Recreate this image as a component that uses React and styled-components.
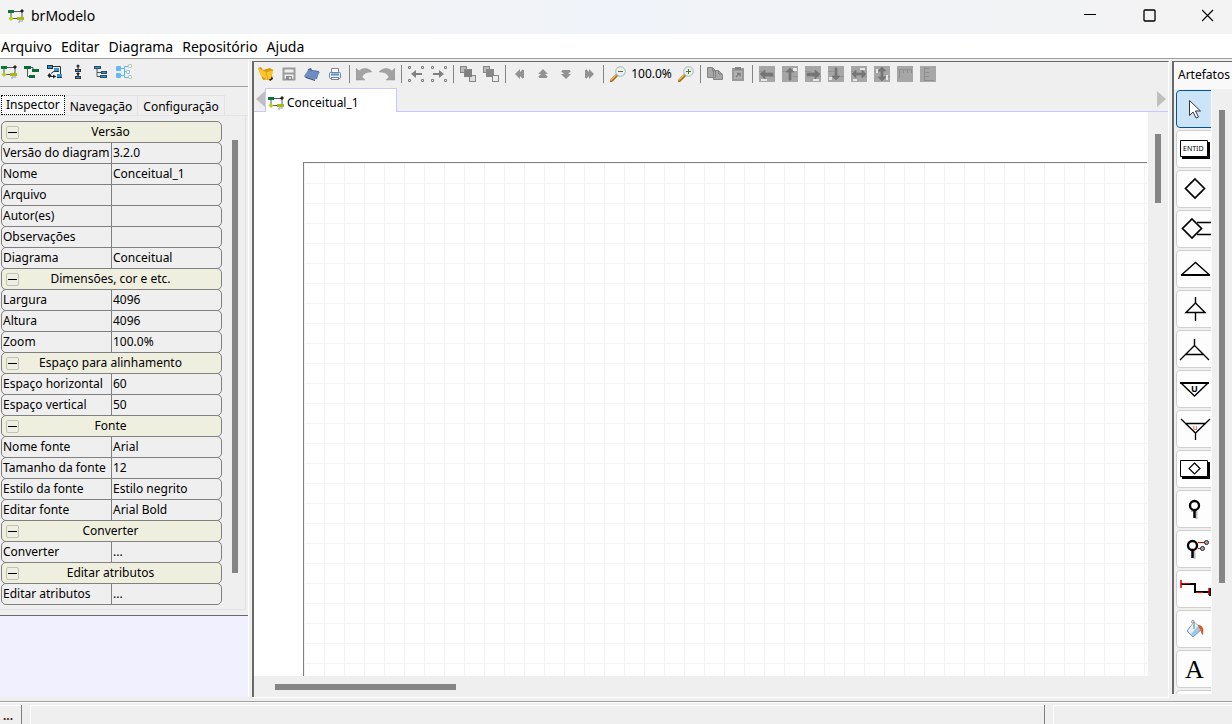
import React, { useState } from 'react'
import styled, { createGlobalStyle, css } from 'styled-components'

const GlobalStyle = createGlobalStyle`
    * {
        box-sizing: border-box;
    }
    body {
        margin: 0;
        background: #efefef;
        color: #000;
        font-family: "Noto Sans", "Open Sans", sans-serif;
        font-size: 12px;
        overflow: hidden;
    }
    button {
        padding: 0;
        border: 0;
        background: none;
        color: inherit;
        font: inherit;
    }
    svg {
        display: block;
        flex: none;
    }
`

const Window = styled.div`
    display: flex;
    flex-direction: column;
    height: 100vh;
    overflow: hidden;
`

const TitleBar = styled.header`
    display: flex;
    align-items: center;
    height: 34px;
    flex: none;
    padding: 0 0 3px 8px;
    gap: 7px;
    background: linear-gradient(90deg, #f3f3f3, #f0f3f9, #f3f3f3);
`

const Title = styled.h1`
    margin: 0;
    flex: 1;
    font-size: 14px;
    line-height: 20px;
    font-weight: 400;
`

const WindowControls = styled.div`
    display: flex;
    gap: 11px;
`

const WindowButton = styled.button`
    display: flex;
    justify-content: center;
    align-items: center;
    width: 48px;
    height: 30px;
`

const MenuBar = styled.nav`
    display: flex;
    align-items: center;
    height: 25px;
    flex: none;
    padding: 1px 1px 0;
    gap: 9px;
    background: #fff;
    border-bottom: 1px solid #a0a0a0;
    font-size: 14px;
    line-height: 20px;
`

const Body = styled.main`
    display: flex;
    flex: 1;
    min-height: 0;
    padding-bottom: 4px;
`

const SidePanel = styled.aside`
    display: flex;
    flex-direction: column;
    width: 249px;
    flex: none;
    border-right: 1px solid #fff;
`

const ModelTools = styled.div`
    display: flex;
    gap: 7px;
    height: 28px;
    padding: 5px 1px 0;
    border-bottom: 1px solid #a0a0a0;
`

const IconButton = styled.button`
    display: flex;
    justify-content: center;
    align-items: center;
    width: ${p => p.$wide ? '23px' : '16px'};
    height: 16px;
`

const Tabs = styled.div`
    display: flex;
    align-items: flex-end;
    height: 29px;
    padding-left: 1px;
    border-bottom: 1px solid #e3e3e3;
`

const SideTab = styled.button`
    height: 20px;
    padding: 1px 5px 0;
    line-height: 20px;
    border: 1px solid #e3e3e3;
    border-width: 1px 1px 0 0;

    ${p => p.$active && css`
        padding: 0 4px;
        line-height: 16px;
        background: #f9f9f9;
        border: 1px dotted #000;
    `}
`

const Inspector = styled.div`
    display: flex;
    justify-content: space-between;
    flex: 1;
    min-height: 0;
    margin-right: 2px;
    padding: 5px 0 3px 1px;
    border: solid #e3e3e3;
    border-width: 0 1px 1px 0;
`

const Properties = styled.table`
    display: block;
    width: 221px;
    border-spacing: 0;

    tbody {
        display: block;
    }
`

const Row = styled.tr`
    display: flex;
    align-items: center;
    height: 22px;
    margin-bottom: -1px;
    border: 1px solid #808080;
    border-radius: 5px;
    background: ${p => p.$section ? '#efefdf' : '#efefef'};
`

const SectionCell = styled.th`
    display: flex;
    align-items: center;
    flex: 1;
    padding: 0 19px 0 4px;
    font-weight: 400;
    line-height: 20px;

    span {
        flex: 1;
    }
`

const Collapse = styled.button`
    display: flex;
    justify-content: center;
    align-items: center;
    width: 13px;
    height: 13px;
    border: 1px solid #c0c0c0;
    border-radius: 2px;

    &::before {
        content: '';
        width: 9px;
        height: 1px;
        background: #000;
    }
`

const NameCell = styled.th`
    width: 109px;
    padding: 0 0 0 1px;
    white-space: nowrap;
    text-align: left;
    font-weight: 400;
    line-height: 20px;
`

const ValueCell = styled.td`
    flex: 1;
    height: 20px;
    padding: 0 0 0 1px;
    border-left: 1px solid #808080;
    line-height: 20px;
`

const Track = styled.div`
    display: flex;
    justify-content: center;
    width: 20px;
    flex: none;
    background: #efefef;
    padding-top: ${p => p.$start || 0}px;
`

const Thumb = styled.div`
    width: ${p => p.$width || 6}px;
    height: ${p => p.$height || 6}px;
    background: #858585;
`

const HelpBox = styled.div`
    height: 82px;
    flex: none;
    margin-top: 5px;
    background: #f0f0ff;
    border-top: 1px solid #696969;
`

const Editor = styled.section`
    display: flex;
    flex-direction: column;
    flex: 1;
    min-width: 0;
    margin: 2px 3px 0;
    border: solid #696969;
    border-width: 1px 0 0 2px;
    border-right: 1px solid #fff;
    box-shadow: 0 1px #fff;
`

const Toolbar = styled.div`
    display: flex;
    align-items: center;
    height: 26px;
    flex: none;
    padding-bottom: 2px;
`

const Separator = styled.span`
    width: 6px;
    height: 18px;
    display: flex;
    justify-content: center;

    &::before {
        content: '';
        width: 1px;
        background: #858585;
    }
`

const ZoomValue = styled.output`
    width: 45px;
    text-align: center;
    line-height: 20px;
`

const DocumentTabs = styled.div`
    display: flex;
    height: 24px;
    flex: none;
    box-shadow: inset 0 -1px #c8c8ff;
`

const ScrollTabs = styled.button`
    display: flex;
    width: 11px;
    padding: 3px 0 0 2px;

    &:last-child {
        margin-left: auto;
        padding-left: 0;
    }
`

const DocumentTab = styled.button`
    display: flex;
    align-items: center;
    gap: 3px;
    width: 132px;
    padding: 4px 2px 0;
    background: #fff;
    border: 1px solid #c8c8ff;
    border-bottom: 0;
`

const CanvasArea = styled.div`
    display: flex;
    flex: 1;
    min-height: 0;
`

const Viewport = styled.div`
    display: flex;
    flex: 1;
    min-width: 0;
    padding: 50px 1px 0 49px;
    background: #fff;
`

const Page = styled.div`
    flex: 1;
    border: solid #808080;
    border-width: 1px 0 0 1px;
    background-image:
        linear-gradient(90deg, #f0f4f8 1px, transparent 1px),
        linear-gradient(#f3f4f6 1px, transparent 1px);
    background-size: 20px 20px;
    background-position: 0 0;
`

const HorizontalTrack = styled.div`
    display: flex;
    align-items: center;
    height: 21px;
    flex: none;
    padding-left: 21px;
`

const Palette = styled.aside`
    display: flex;
    flex-direction: column;
    width: 60px;
    flex: none;
    margin: 2px 0 3px;
    border: solid #696969;
    border-width: 1px 0 0 2px;
    background: #f9f9f9;
    overflow: hidden;
`

const PaletteTitle = styled.h2`
    margin: 0;
    height: 27px;
    padding-left: 4px;
    font-size: 12px;
    line-height: 25px;
    font-weight: 400;
`

const PaletteBody = styled.div`
    display: flex;
    justify-content: space-between;
    flex: 1;
    min-height: 0;
`

const Artifacts = styled.div`
    display: flex;
    flex-direction: column;
    gap: 2px;
    width: 37px;
    padding: 1px 0 0 2px;
    overflow: hidden;
    background: #efefef;
`

const Artifact = styled.button`
    display: flex;
    align-items: center;
    width: 40px;
    height: 38px;
    flex: none;
    background: ${p => p.$active ? '#cce4f7' : '#fdfdfd'};
    border: 1px solid ${p => p.$active ? '#005499' : '#d0d0d0'};
    border-radius: 4px;

    svg {
        margin: -1px;
    }
`

const StatusBar = styled.footer`
    display: flex;
    gap: 8px;
    height: 23px;
    flex: none;
    padding-top: 3px;
    border-top: 1px solid #a0a0a0;
    box-shadow: inset 0 1px #fff;
`

const StatusCell = styled.div`
    flex: ${p => p.$grow ? '1' : 'none'};
    width: ${p => p.$width || 0}px;
    padding-left: 3px;
    color: #4a1d00;
    font-weight: 700;
    line-height: 22px;
    border-right: ${p => p.$last ? '0' : '1px solid #808080'};
    border-left: ${p => p.$first ? '0' : '1px solid #fff'};
    box-shadow: inset 0 1px #fff;
`

/* ---------- icons ---------- */

const Icon = ({ children, ...rest }) => (
    <svg width="16" height="16" viewBox="0 0 16 16" fill="none" aria-hidden="true" {...rest}>
        {children}
    </svg>
)

const ConceptualIcon = () => (
    <Icon>
        <path d="M3 4V10M5 3.500H14M14 4V11M4 10.500H10" stroke="#555" />
        <rect x="0" y="2" width="6" height="3" fill="#087832" />
        <path d="M14 1l2 2-2 2-2-2z" fill="#222" />
        <path d="M3 8l2.500 2.500L3 13 .5 10.500z" fill="#b4cf18" />
        <rect x="9" y="9" width="7" height="3" fill="#a5ba12" />
        <path d="M11 13h4M10 14h2" stroke="#8f9db5" />
    </Icon>
)

const LogicalIcon = () => (
    <Icon>
        <path d="M3.500 5V12.500H7M6 3.500H9V6" stroke="#555" />
        <rect x="0" y="2" width="7" height="3" fill="#0b6a33" />
        <rect x="8" y="5" width="7" height="3" fill="#0b6a33" />
        <rect x="5" y="11" width="6" height="3" fill="#0b6a33" />
    </Icon>
)

const FlowIcon = () => (
    <Icon>
        <path d="M6 2.500H13.500V10M8 6.500L4 9.500M3 12.500H9" stroke="#333" />
        <rect x="0" y="1" width="6" height="4" fill="#1f3546" />
        <rect x="1" y="2" width="4" height="2" fill="#3493d3" />
        <rect x="7" y="4" width="5" height="3" fill="#3493d3" />
        <path d="M7 7.500h5" stroke="#1f3546" />
        <path d="M2.500 9l2 2.500-2 2.500-2-2.500z" fill="#222" />
        <path d="M6 10.500l3 2-3 2z" fill="#222" />
        <rect x="10" y="10" width="5" height="3" fill="#3493d3" />
        <path d="M10 13.500h5" stroke="#1f3546" />
    </Icon>
)

const ActivityIcon = () => (
    <Icon>
        <path d="M8 2V14" stroke="#333" />
        <circle cx="8" cy="2" r="1.500" fill="#333" />
        <rect x="5.500" y="5.500" width="5" height="2" fill="#3493d3" stroke="#333" />
        <path d="M6 9h4l-2 3z" fill="#222" />
        <rect x="5.500" y="12.500" width="5" height="2" fill="#3493d3" stroke="#333" />
    </Icon>
)

const TreeIcon = () => (
    <Icon>
        <path d="M4 4V12.500H8M4 8.500H9" stroke="#555" />
        <rect x="1.500" y="2.500" width="6" height="2" fill="#3493d3" stroke="#294c66" />
        <rect x="8.500" y="7.500" width="5" height="2" fill="#3493d3" stroke="#294c66" />
        <rect x="7.500" y="11.500" width="6" height="2" fill="#3493d3" stroke="#294c66" />
    </Icon>
)

const MapIcon = () => (
    <Icon>
        <path d="M5 4.500H8.500V2.500H12M5 11.500H8.500V13.500H12M8.500 5V11M8 7.500H12" stroke="#62b5ea" />
        <rect x="0" y="2" width="5" height="5" rx="1" fill="#62b9f2" />
        <rect x="0" y="9" width="5" height="5" rx="1" fill="#62b9f2" />
        <rect x="12.500" y=".5" width="3" height="3" rx="1" fill="#fff" stroke="#9bb" />
        <rect x="10.500" y="6.500" width="3" height="3" rx="1" fill="#fff" stroke="#62b5ea" />
        <rect x="12.500" y="11.500" width="3" height="3" rx="1" fill="#fff" stroke="#9bb" />
    </Icon>
)

const OpenIcon = () => (
    <Icon>
        <path d="M10 12l4-2 1 3-3 2z" fill="#1f1a10" />
        <path d="M0 2l3-1 2 3 7-2 3 2-2 9-8 1z" fill="#d99a0b" />
        <path d="M0 2l8 4 7-2-2 8-3 2-7-4z" fill="#fbc52d" />
        <path d="M8 6l2 8M8 6l7-2" stroke="#e0a012" />
    </Icon>
)

const SaveIcon = () => (
    <Icon>
        <path d="M2.500 2.500h11v11h-11z" stroke="#9b9b9b" strokeWidth="2" />
        <path d="M3 7.500h10" stroke="#9b9b9b" strokeWidth="2" />
        <path d="M5 10h6v4H5z" fill="#8c8c8c" />
        <path d="M8 11h2v2H8z" fill="#ddd" />
    </Icon>
)

const FolderIcon = () => (
    <Icon>
        <path d="M4 3l3-1 1 2 7 1-2 8-8-2z" fill="#47669b" />
        <path d="M4 4l12 2-5 8L0 10z" fill="#6f8dc0" />
        <path d="M0 10l11 4v1L2 12z" fill="#2e4775" />
    </Icon>
)

const PrintIcon = () => (
    <Icon>
        <path d="M4.500 6V2.500h7V6" fill="#fff" stroke="#7a8796" />
        <rect x="2.500" y="6.500" width="11" height="6" rx="1" fill="#e9eef5" stroke="#7587a0" />
        <path d="M4 8.500h8" stroke="#5b8fc9" strokeWidth="2" />
        <rect x="4.500" y="11.500" width="7" height="2" fill="#fff" stroke="#7587a0" />
    </Icon>
)

const UndoIcon = ({ flip }) => (
    <Icon>
        <path
            d="M0 2v12h9L6 11c2-4 5-5 10-5C13 2 7 1 3 5z"
            fill="#a3a3a3"
            stroke="#969696"
            strokeWidth=".5"
            transform={flip ? 'matrix(-1 0 0 1 16 0)' : undefined}
        />
    </Icon>
)

const Corners = () => (
    <path d="M.5.5h2v2h-2zM13.500.5h2v2h-2zM.5 13.500h2v2h-2zM13.500 13.500h2v2h-2z" stroke="#808080" />
)

const MoveIcon = ({ right }) => (
    <Icon>
        <Corners />
        <path d={right ? 'M2 7h6V4l5 4-5 4V9H2z' : 'M14 7H8V4L3 8l5 4V9h6z'} fill="#808080" />
    </Icon>
)

const LayerIcon = ({ back }) => (
    <Icon>
        <rect x=".5" y=".5" width="6" height="6" fill="#bbb" stroke="#858585" />
        <rect x={back ? 3 : 4} y="3" width="8" height="8" fill="#888" />
        <rect x="9.500" y="9.500" width="6" height="6" fill={back ? '#eee' : '#ddd'} stroke="#858585" />
        {!back && <rect x="5" y="4" width="7" height="7" fill="#808080" />}
    </Icon>
)

const NudgeIcon = ({ turn }) => (
    <Icon>
        <g transform={`rotate(${turn} 8 8)`} fill="#929292">
            <path d="M3 8l5-5v3l3-3v10l-3-3v3z" />
            <path d="M11 4h1v8h-1z" />
        </g>
    </Icon>
)

const ZoomIcon = ({ plus }) => (
    <Icon>
        <path d="M1 15l6-6" stroke="#a66b1c" strokeWidth="3" strokeLinecap="round" />
        <path d="M1 14l5-5" stroke="#edb052" strokeWidth="1.500" strokeLinecap="round" />
        <circle cx="10.500" cy="5.500" r="4.800" fill="#e5f2f1" stroke="#a5b5b8" />
        <path d={plus ? 'M8 5.500h5M10.500 3v5' : 'M8 5.500h5'} stroke="#6c6a30" />
    </Icon>
)

const CopyIcon = () => (
    <Icon>
        <path d="M.5 1.500h5l3 3v7h-8zM6.500 4.500h5l4 4v5h-9z" fill="#a8a8a8" stroke="#858585" />
        <path d="M5.500 2v3h3M11.500 5v3h4" stroke="#858585" />
    </Icon>
)

const PasteIcon = () => (
    <Icon>
        <rect x="2" y="2" width="12" height="13" fill="#999" />
        <path d="M5 1h6v3H5z" fill="#858585" />
        <path d="M4 5h8v8H4z" fill="#b0b0b0" />
        <path d="M6 11l3-3M7 7.500h3v3" stroke="#808080" strokeWidth="1.500" />
    </Icon>
)

const alignArt = {
    left: ['M1 8l5-4v3h8v3H6v3z', 'M2 15v-2h6v2z'],
    up: ['M8 2l4 4H9v8H7V6H4z', 'M11 2h4v3h-4z'],
    right: ['M15 8l-5-4v3H2v3h8v3z', 'M8 13h6v2H8z'],
    down: ['M8 14l4-4H9V2H7v8H4z', 'M1 11h3v3H1z'],
    width: ['M1 8l4-4v3h6V4l4 4-4 4V9H5v3z', 'M9 2h5v2H9zM2 13h4v2H2z'],
    height: ['M8 1l4 4H9v6h3l-4 4-4-4h3V5H4z', 'M2 3h2v4H2zM12 9h2v5h-2z'],
}

const AlignIcon = ({ kind }) => (
    <Icon>
        <rect width="16" height="16" fill="#a6a6a6" />
        {alignArt[kind] && (
            <>
                <path d="M0 5.500h6M10 10.500h6" stroke="#959595" />
                <path d={alignArt[kind][1]} fill="#e6e6e6" />
                <path d={alignArt[kind][0]} fill="#757575" stroke="#757575" strokeWidth=".7" />
            </>
        )}
        {kind === 'rulerH' && <path d="M1 3.500h14M2.500 4v8M6.500 4v3M10.500 4v3M14.500 4v3" stroke="#8f8f8f" />}
        {kind === 'rulerV' && <path d="M4.500 1v14M5 2.500h4M5 6.500h4M5 10.500h4M5 14.500h9" stroke="#8f8f8f" />}
    </Icon>
)

const TabArrow = ({ right }) => (
    <svg width="9" height="16" viewBox="0 0 9 16" aria-hidden="true">
        <path d={right ? 'M0 0l9 8-9 8z' : 'M9 0L0 8l9 8z'} fill="#bfbfbf" />
    </svg>
)

const artifactArt = {
    Selecionar: (
        <path d="M13.500 10.500v15l3.500-3.500 3 6 2.500-1-3-6h5z" fill="#fff" stroke="#334" />
    ),
    Entidade: (
        <>
            <path d="M6 12h28v17H6z" fill="#000" />
            <path d="M4.500 10.500h27v16h-27z" fill="#fff" stroke="#000" />
            <text x="7" y="21" fontSize="7" fill="#000">ENTID</text>
        </>
    ),
    Relacionamento: (
        <path d="M19 9l9.500 9.500L19 28l-9.500-9.500z" fill="#fff" stroke="#000" strokeWidth="1.700" />
    ),
    'Entidade associativa': (
        <>
            <path d="M21 12.500h15M21 24.500h15" stroke="#000" strokeWidth="1.300" />
            <path d="M16 9l9.500 9.500L16 28l-9.500-9.500z" fill="#fff" stroke="#000" strokeWidth="1.700" />
        </>
    ),
    Especialização: (
        <>
            <path d="M6 24.500l13.500-12 13.500 12" fill="#fff" stroke="#000" strokeWidth="1.400" />
            <path d="M5 25h29" stroke="#000" strokeWidth="2" />
        </>
    ),
    'Especialização exclusiva': (
        <>
            <path d="M19.500 7v6M19.500 22v9" stroke="#000" strokeWidth="1.400" />
            <path d="M10 22.500l9.500-9.500 9.500 9.500z" fill="#fff" stroke="#000" strokeWidth="1.400" />
        </>
    ),
    'Especialização não exclusiva': (
        <path d="M18.500 9v6M4 30l14.500-14.500L33 30M10 24.500h17" stroke="#000" strokeWidth="1.400" fill="none" />
    ),
    União: (
        <>
            <path d="M5 13l13.500 13L32 13" fill="#fff" stroke="#000" strokeWidth="1.400" />
            <path d="M4 13h29" stroke="#000" strokeWidth="2" />
            <text x="15" y="22" fontSize="9" fontWeight="700" fill="#000">U</text>
        </>
    ),
    'União parcial': (
        <>
            <path d="M5 9l14.500 14L34 9M9 13.500h21M19.500 23v7" stroke="#000" strokeWidth="1.300" fill="none" />
            <text x="17" y="20" fontSize="7" fill="#d03020">u</text>
        </>
    ),
    'Entidade relacionamento': (
        <>
            <path d="M6 12h28v17H6z" fill="#000" />
            <path d="M4.500 10.500h27v16h-27z" fill="#fff" stroke="#000" />
            <path d="M18.500 13l5.500 5.500-5.500 5.500-5.500-5.500z" fill="#fff" stroke="#000" strokeWidth="1.200" />
        </>
    ),
    Atributo: (
        <>
            <path d="M20.500 21v8M15 21h6" stroke="#bbb" strokeWidth="2" />
            <circle cx="18.500" cy="15.500" r="4.500" fill="#fff" stroke="#000" strokeWidth="2.300" />
            <path d="M18.500 20v8" stroke="#000" strokeWidth="2.500" />
        </>
    ),
    'Atributo composto': (
        <>
            <path d="M22 12.500h7M22 18.500h3" stroke="#e00000" />
            <path d="M18.500 21v8" stroke="#bbb" strokeWidth="2" />
            <circle cx="16.500" cy="15.500" r="4.500" fill="#fff" stroke="#000" strokeWidth="2.300" />
            <path d="M16.500 20v8" stroke="#000" strokeWidth="2.500" />
            <circle cx="30.500" cy="12.500" r="2" fill="#aaa" stroke="#222" />
            <circle cx="26.500" cy="18.500" r="2" fill="#aaa" stroke="#222" />
        </>
    ),
    Ligação: (
        <>
            <path d="M5 14h14v8h15M34 18v8" stroke="#000" strokeWidth="2" fill="none" />
            <path d="M5 10v8M33 18v7" stroke="#d00000" strokeWidth="1.500" />
            <path d="M6 13.500h8M20 22.500h7" stroke="#e00000" />
        </>
    ),
    Pintar: (
        <>
            <path d="M18 12l8 7-9 8-6-6z" fill="#9fc8e8" stroke="#7a9ab5" />
            <path d="M18 12l-6 9 3 3 7-8z" fill="#e5f2fb" />
            <path d="M18 19v-7c0-3-3-2-2 1" fill="none" stroke="#777" />
            <path d="M22 15c5 0 6 4 5 10-3-2-1-5-4-7z" fill="#e5541b" />
        </>
    ),
    Texto: (
        <text x="9" y="28" fontSize="26" fontFamily="Liberation Serif, serif" fill="#000">A</text>
    ),
    Exportar: null,
}

/* ---------- data ---------- */

const menus = ['Arquivo', 'Editar', 'Diagrama', 'Repositório', 'Ajuda']

const modelTools = [
    ['Conceitual', ConceptualIcon],
    ['Lógico', LogicalIcon],
    ['Fluxo', FlowIcon],
    ['Atividade', ActivityIcon],
    ['EAP', TreeIcon],
    ['Livre', MapIcon],
]

const sections = [
    ['Versão', [
        ['Versão do diagram', '3.2.0'],
        ['Nome', 'Conceitual_1'],
        ['Arquivo', ''],
        ['Autor(es)', ''],
        ['Observações', ''],
        ['Diagrama', 'Conceitual'],
    ]],
    ['Dimensões, cor e etc.', [
        ['Largura', '4096'],
        ['Altura', '4096'],
        ['Zoom', '100.0%'],
    ]],
    ['Espaço para alinhamento', [
        ['Espaço horizontal', '60'],
        ['Espaço vertical', '50'],
    ]],
    ['Fonte', [
        ['Nome fonte', 'Arial'],
        ['Tamanho da fonte', '12'],
        ['Estilo da fonte', 'Estilo negrito'],
        ['Editar fonte', 'Arial Bold'],
    ]],
    ['Converter', [['Converter', '...']]],
    ['Editar atributos', [['Editar atributos', '...']]],
]

const toolGroups = [
    [['Abrir', <OpenIcon />], ['Salvar', <SaveIcon />], ['Fechar', <FolderIcon />], ['Imprimir', <PrintIcon />]],
    [['Desfazer', <UndoIcon />], ['Refazer', <UndoIcon flip />]],
    [['Seleção anterior', <MoveIcon />], ['Próxima seleção', <MoveIcon right />]],
    [['Trazer para frente', <LayerIcon />], ['Enviar para trás', <LayerIcon back />]],
    [
        ['Mover à esquerda', <NudgeIcon turn={0} />],
        ['Mover acima', <NudgeIcon turn={90} />],
        ['Mover abaixo', <NudgeIcon turn={270} />],
        ['Mover à direita', <NudgeIcon turn={180} />],
    ],
]

const alignKinds = ['left', 'up', 'right', 'down', 'width', 'height', 'rulerH', 'rulerV']

const Tool = ({ label, children }) => (
    <IconButton $wide type="button" aria-label={label}>{children}</IconButton>
)

const App = () => {
    const [tab, setTab] = useState('Inspector')
    const [artifact, setArtifact] = useState('Selecionar')
    const [closed, setClosed] = useState({})

    const toggle = name => setClosed({ ...closed, [name]: !closed[name] })

    return (
        <Window>
            <GlobalStyle />
            <TitleBar>
                <ConceptualIcon />
                <Title>brModelo</Title>
                <WindowControls>
                    <WindowButton type="button" aria-label="Minimizar">
                        <svg width="13" height="13" stroke="#000"><path d="M0 5.500h12" /></svg>
                    </WindowButton>
                    <WindowButton type="button" aria-label="Maximizar">
                        <svg width="13" height="13" fill="none" stroke="#000">
                            <rect x="1" y="1" width="11" height="11" rx="1" strokeWidth="1.300" />
                        </svg>
                    </WindowButton>
                    <WindowButton type="button" aria-label="Fechar janela">
                        <svg width="13" height="13" stroke="#000"><path d="M0 1l11 11M11 1L0 12" strokeWidth="1.200" /></svg>
                    </WindowButton>
                </WindowControls>
            </TitleBar>
            <MenuBar>
                {menus.map(m => <button type="button" key={m}>{m}</button>)}
            </MenuBar>
            <Body>
                <SidePanel>
                    <ModelTools>
                        {modelTools.map(([label, Art]) => (
                            <IconButton type="button" key={label} aria-label={label}><Art /></IconButton>
                        ))}
                    </ModelTools>
                    <Tabs role="tablist">
                        {['Inspector', 'Navegação', 'Configuração'].map(name => (
                            <SideTab
                                type="button"
                                role="tab"
                                key={name}
                                aria-selected={tab === name}
                                $active={tab === name}
                                onClick={() => setTab(name)}
                            >
                                {name}
                            </SideTab>
                        ))}
                    </Tabs>
                    <Inspector>
                        <Properties>
                            <tbody>
                                {sections.map(([name, rows]) => (
                                    <React.Fragment key={name}>
                                        <Row $section>
                                            <SectionCell colSpan={2}>
                                                <Collapse type="button" aria-label={`Recolher ${name}`} onClick={() => toggle(name)} />
                                                <span>{name}</span>
                                            </SectionCell>
                                        </Row>
                                        {!closed[name] && rows.map(([label, value]) => (
                                            <Row key={label}>
                                                <NameCell scope="row">{label}</NameCell>
                                                <ValueCell>{value}</ValueCell>
                                            </Row>
                                        ))}
                                    </React.Fragment>
                                ))}
                            </tbody>
                        </Properties>
                        <Track $start={19}><Thumb $height={433} /></Track>
                    </Inspector>
                    <HelpBox />
                </SidePanel>
                <Editor>
                    <Toolbar>
                        {toolGroups.map((group, i) => (
                            <React.Fragment key={i}>
                                {group.map(([label, icon]) => <Tool key={label} label={label}>{icon}</Tool>)}
                                <Separator />
                            </React.Fragment>
                        ))}
                        <Tool label="Diminuir zoom"><ZoomIcon /></Tool>
                        <ZoomValue>100.0%</ZoomValue>
                        <Tool label="Aumentar zoom"><ZoomIcon plus /></Tool>
                        <Separator />
                        <Tool label="Copiar"><CopyIcon /></Tool>
                        <Tool label="Colar"><PasteIcon /></Tool>
                        <Separator />
                        {alignKinds.map(kind => (
                            <Tool key={kind} label={`Alinhar ${kind}`}><AlignIcon kind={kind} /></Tool>
                        ))}
                    </Toolbar>
                    <DocumentTabs>
                        <ScrollTabs type="button" aria-label="Aba anterior"><TabArrow /></ScrollTabs>
                        <DocumentTab type="button"><ConceptualIcon />Conceitual_1</DocumentTab>
                        <ScrollTabs type="button" aria-label="Próxima aba"><TabArrow right /></ScrollTabs>
                    </DocumentTabs>
                    <CanvasArea>
                        <Viewport><Page /></Viewport>
                        <Track $start={22}><Thumb $height={69} /></Track>
                    </CanvasArea>
                    <HorizontalTrack><Thumb $width={181} /></HorizontalTrack>
                </Editor>
                <Palette>
                    <PaletteTitle>Artefatos</PaletteTitle>
                    <PaletteBody>
                        <Artifacts>
                            {Object.keys(artifactArt).map(name => (
                                <Artifact
                                    type="button"
                                    key={name}
                                    aria-label={name}
                                    $active={artifact === name}
                                    onClick={() => setArtifact(name)}
                                >
                                    <svg width="36" height="38" viewBox="0 0 36 38">{artifactArt[name]}</svg>
                                </Artifact>
                            ))}
                        </Artifacts>
                        <Track $start={21}><Thumb $height={473} /></Track>
                    </PaletteBody>
                </Palette>
            </Body>
            <StatusBar>
                <StatusCell $width={22} $first>...</StatusCell>
                <StatusCell $grow />
                <StatusCell $width={179} $last />
            </StatusBar>
        </Window>
    )
}

export default App
